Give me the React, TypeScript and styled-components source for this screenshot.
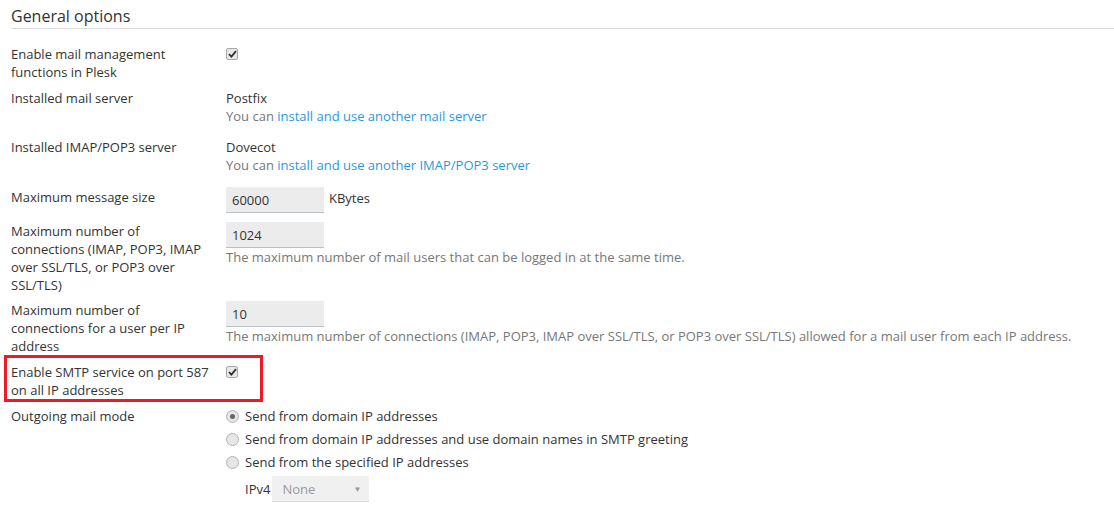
import React from 'react';
import styled, { createGlobalStyle, css } from 'styled-components';

const GlobalStyle = createGlobalStyle`
  body {
    margin: 0;
    background: #fff;
    font-family: 'Open Sans', 'Liberation Sans', sans-serif;
    font-size: 13px;
    line-height: 18px;
    color: #333;
  }
`;

const Page = styled.div`
  padding: 5px 0 0 11px;
`;

const Heading = styled.h2`
  margin: 0 0 16px;
  padding-bottom: 1px;
  font-size: 16px;
  font-weight: 400;
  line-height: 22px;
  color: #333;
  border-bottom: 1px solid #ddd;
`;

const Row = styled.div<{ $highlighted?: boolean; $space?: number }>`
  position: relative;
  display: grid;
  grid-template-columns: 215px 1fr;
  margin-bottom: ${(p) => (p.$space ?? 8)}px;

  ${(p) =>
    p.$highlighted &&
    css`
      &::after {
        content: '';
        position: absolute;
        top: -8px;
        left: -7px;
        width: 253px;
        bottom: -3px;
        border: 3px solid #ed1c24;
        pointer-events: none;
      }
    `}
`;

const Label = styled.div`
  width: 200px;
  color: #333;
`;

const Field = styled.div`
  display: flex;
  flex-direction: column;
  align-items: flex-start;
`;

const Inline = styled.div`
  display: flex;
  align-items: center;
  gap: 5px;
`;

const Hint = styled.div`
  color: #777;
`;

const Link = styled.a`
  color: #1f9ae0;
  text-decoration: none;
`;

const CheckBox = styled.span`
  display: inline-flex;
  align-items: center;
  justify-content: center;
  box-sizing: border-box;
  width: 12px;
  height: 12px;
  margin-top: 3px;
  border: 1px solid #a9a9a9;
  border-radius: 2px;
  background: #e8e8e8;
`;

const TextBox = styled.div`
  box-sizing: border-box;
  width: 98px;
  height: 26px;
  padding: 4px 6px;
  background: #ececec;
  border-bottom: 1px solid #b9c0c6;
  color: #333;
`;

const Unit = styled.span`
  align-self: flex-start;
  padding-top: 2px;
`;

const RadioList = styled.div`
  display: flex;
  flex-direction: column;
  gap: 5px;
`;

const RadioLine = styled.label`
  display: flex;
  align-items: center;
  gap: 6px;
`;

const Radio = styled.span<{ $checked?: boolean }>`
  position: relative;
  box-sizing: border-box;
  width: 13px;
  height: 13px;
  border-radius: 50%;
  border: 1px solid #b4b4b4;
  background: #e6e6e6;

  ${(p) =>
    p.$checked &&
    css`
      &::after {
        content: '';
        position: absolute;
        top: 3px;
        left: 3px;
        width: 5px;
        height: 5px;
        border-radius: 50%;
        background: #666;
      }
    `}
`;

const SubOption = styled.div`
  display: flex;
  align-items: center;
  gap: 2px;
  margin: 5px 0 0 19px;
`;

const Select = styled.div`
  box-sizing: border-box;
  display: flex;
  align-items: center;
  justify-content: space-between;
  width: 97px;
  height: 26px;
  padding: 0 8px 0 10px;
  background: #f0f0f0;
  border-bottom: 1px solid #dcdcdc;
  color: #9a9a9a;
  font-size: 13px;
`;

const Arrow = styled.span`
  font-size: 8px;
  color: #999;
`;

const Check = () => (
  <CheckBox>
    <svg width="9" height="8" viewBox="0 0 9 8">
      <path d="M1 4.2 L3.4 6.6 L8 1.2" fill="none" stroke="#333" strokeWidth="1.8" />
    </svg>
  </CheckBox>
);

export default function App() {
  return (
    <Page>
      <GlobalStyle />
      <Heading>General options</Heading>

      <Row>
        <Label>Enable mail management functions in Plesk</Label>
        <Field>
          <Check />
        </Field>
      </Row>

      <Row $space={13}>
        <Label>Installed mail server</Label>
        <Field>
          <div>Postfix</div>
          <Hint>
            You can <Link href="#">install and use another mail server</Link>
          </Hint>
        </Field>
      </Row>

      <Row $space={13}>
        <Label>Installed IMAP/POP3 server</Label>
        <Field>
          <div>Dovecot</div>
          <Hint>
            You can <Link href="#">install and use another IMAP/POP3 server</Link>
          </Hint>
        </Field>
      </Row>

      <Row $space={9}>
        <Label style={{ paddingTop: 1 }}>Maximum message size</Label>
        <Field>
          <Inline>
            <TextBox>60000</TextBox>
            <Unit>KBytes</Unit>
          </Inline>
        </Field>
      </Row>

      <Row $space={7}>
        <Label>Maximum number of connections (IMAP, POP3, IMAP over SSL/TLS, or POP3 over SSL/TLS)</Label>
        <Field>
          <TextBox>1024</TextBox>
          <Hint>The maximum number of mail users that can be logged in at the same time.</Hint>
        </Field>
      </Row>

      <Row $space={8}>
        <Label>Maximum number of connections for a user per IP address</Label>
        <Field>
          <TextBox>10</TextBox>
          <Hint>
            The maximum number of connections (IMAP, POP3, IMAP over SSL/TLS, or POP3 over SSL/TLS) allowed for a
            mail user from each IP address.
          </Hint>
        </Field>
      </Row>

      <Row $highlighted $space={8} style={{ marginTop: 8 }}>
        <Label>Enable SMTP service on port 587 on all IP addresses</Label>
        <Field>
          <Check />
        </Field>
      </Row>

      <Row>
        <Label>Outgoing mail mode</Label>
        <Field>
          <RadioList>
            <RadioLine>
              <Radio $checked />
              Send from domain IP addresses
            </RadioLine>
            <RadioLine>
              <Radio />
              Send from domain IP addresses and use domain names in SMTP greeting
            </RadioLine>
            <RadioLine>
              <Radio />
              Send from the specified IP addresses
            </RadioLine>
          </RadioList>
          <SubOption>
            <span>IPv4</span>
            <Select>
              <span>None</span>
              <Arrow>▼</Arrow>
            </Select>
          </SubOption>
        </Field>
      </Row>
    </Page>
  );
}
